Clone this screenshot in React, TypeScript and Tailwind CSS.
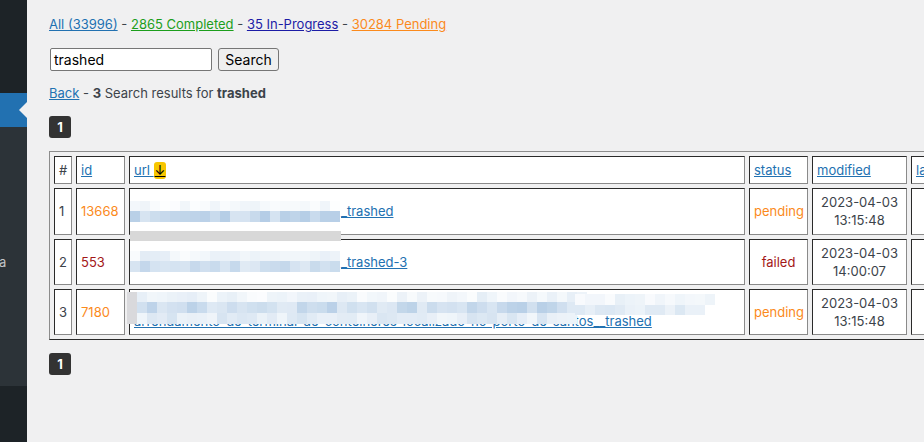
import { JSX } from "react";

type Band = { x: number; y: number; h: number; n: number; lo: number; hi: number; w?: number };

// pixelated redaction blocks, like the ones pasted over the urls in the screenshot
const Pixels = ({
  width,
  height,
  bands,
  seed,
  opaque,
}: {
  width: number;
  height: number;
  bands: Band[];
  seed: number;
  opaque?: boolean;
}): JSX.Element => {
  let s = seed;
  const rnd = () => {
    s = (s * 9301 + 49297) % 233280;
    return s / 233280;
  };
  return (
    <svg width={width} height={height} className="block">
      {bands.map((b, bi) => (
        <g key={bi}>
          {opaque && (
            <rect x={b.x} y={b.y} width={b.n * (b.w ?? 10)} height={b.h} fill="#ffffff" />
          )}
          {Array.from({ length: b.n }).map((_, i) => (
            <rect
              key={i}
              x={b.x + i * (b.w ?? 10)}
              y={b.y}
              width={b.w ?? 10}
              height={b.h}
              fill="#7fa9d3"
              fillOpacity={b.lo + rnd() * (b.hi - b.lo)}
            />
          ))}
        </g>
      ))}
    </svg>
  );
};

const cell =
  "border border-t-[#2a2a2a] border-l-[#2a2a2a] border-b-[#8a8a8a] border-r-[#8a8a8a] bg-white px-[4px] py-[4px]";
const link = "text-[#2271b1] underline";

const rows = [
  { n: "1", id: "13668", idColor: "text-[#fb8a1c]", status: "pending", sColor: "text-[#fb8a1c]", date: "2023-04-03", time: "13:15:48" },
  { n: "2", id: "553", idColor: "text-[#a31818]", status: "failed", sColor: "text-[#a31818]", date: "2023-04-03", time: "14:00:07" },
  { n: "3", id: "7180", idColor: "text-[#fb8a1c]", status: "pending", sColor: "text-[#fb8a1c]", date: "2023-04-03", time: "13:15:48" },
];

const Pager = (): JSX.Element => (
  <div className="w-[22px] h-[22px] rounded-[3px] bg-[#333333] text-white font-bold text-[13px] flex items-center justify-center">
    1
  </div>
);

const UrlCell = ({ index }: { index: number }): JSX.Element => {
  if (index === 0) {
    return (
      <div className="relative flex items-center -ml-[4px]">
        <Pixels
          width={211}
          height={21}
          seed={11}
          bands={[
            { x: 0, y: 0, h: 10, n: 21, lo: 0, hi: 0.14 },
            { x: 0, y: 10, h: 11, n: 21, lo: 0.3, hi: 0.62 },
          ]}
        />
        <a className={link}>_trashed</a>
        <div className="absolute left-0 top-[30px] w-[211px] h-[10px] bg-[#d8d8d8] z-10" />
      </div>
    );
  }
  if (index === 1) {
    return (
      <div className="flex items-center -ml-[4px]">
        <Pixels
          width={211}
          height={21}
          seed={47}
          bands={[
            { x: 0, y: 0, h: 10, n: 21, lo: 0.03, hi: 0.22 },
            { x: 0, y: 10, h: 11, n: 21, lo: 0.22, hi: 0.48 },
          ]}
        />
        <a className={link}>_trashed-3</a>
      </div>
    );
  }
  return (
    <div className="relative">
      <div className="h-[18.2px]" />
      <a className={link}>arrendamento-de-terminal-de-conteineres-localizado-no-porto-de-santos__trashed</a>
      <div className="absolute -left-[7px] -top-[2px] z-10">
        <svg width={590} height={33} className="block">
          <rect x={0} y={0} width={10} height={32} fill="#d9d9dc" />
        </svg>
        <div className="absolute left-0 top-0">
          <Pixels
            width={590}
            height={33}
            seed={93}
            opaque
            bands={[
              { x: 10, y: 0, h: 10, n: 45, lo: 0.03, hi: 0.2 },
              { x: 10, y: 10, h: 11, n: 45, lo: 0.22, hi: 0.55 },
              { x: 10, y: 21, h: 11, n: 44, lo: 0.08, hi: 0.32 },
              { x: 448, y: 2, h: 11, n: 14, lo: 0.04, hi: 0.2 },
              { x: 448, y: 13, h: 10, n: 13, lo: 0.14, hi: 0.34 },
            ]}
          />
        </div>
      </div>
    </div>
  );
};

export default function App(): JSX.Element {
  return (
    <div className="w-[924px] h-[442px] flex overflow-hidden bg-[#f0f0f1] font-[Inter,sans-serif] text-[13px] leading-[18.2px] text-[#3c434a]">
      <div className="w-[27px] shrink-0 flex flex-col overflow-hidden">
        <div className="h-[93px] bg-[#1d2327]" />
        <div className="h-[34px] bg-[#2271b1] relative">
          <div className="absolute right-0 top-[9px] w-0 h-0 border-y-[8px] border-y-transparent border-r-[8px] border-r-[#f0f0f1]" />
        </div>
        <div className="h-[259px] bg-[#2c3338] pt-[126px] text-[#c3c4c7] -indent-[1px] whitespace-nowrap">
          a
        </div>
        <div className="flex-1 bg-[#1d2327]" />
      </div>

      <div className="flex-1 min-w-0 flex flex-col pl-[22px] pt-[15px] overflow-hidden">
        <div className="h-[18px] leading-[18px] whitespace-nowrap">
          <a className={link}>All (33996)</a> -{" "}
          <a className="text-[#1c9e1c] underline">2865 Completed</a> -{" "}
          <a className="text-[#1c1ca6] underline">35 In-Progress</a> -{" "}
          <a className="text-[#fb8a1c] underline">30284 Pending</a>
        </div>

        <div className="mt-[15px] flex items-center gap-[6px] ml-[1px]">
          <div className="w-[162px] h-[23px] border border-[#767676] rounded-[2px] bg-white px-[3px] text-[14px] leading-[21px] text-black">
            trashed
          </div>
          <div className="w-[61px] h-[23px] border border-[#767676] rounded-[3px] bg-[#efefef] text-[14px] leading-[21px] text-black text-center">
            Search
          </div>
        </div>

        <div className="mt-[13px] h-[18px] leading-[18px] whitespace-nowrap">
          <a className={link}>Back</a> - <b>3</b> Search results for <b>trashed</b>
        </div>

        <div className="mt-[14px]">
          <Pager />
        </div>

        <div className="mt-[13px]">
          <table className="w-[987px] table-fixed border-separate border-spacing-[4px] border border-t-[#8c8c8c] border-l-[#8c8c8c] border-b-[#2a2a2a] border-r-[#2a2a2a]">
            <thead>
              <tr>
                <th className={`${cell} w-[18px] text-left font-normal`}>#</th>
                <th className={`${cell} w-[49px] text-left font-normal`}>
                  <a className={link}>id</a>
                </th>
                <th className={`${cell} w-[616px] text-left font-normal`}>
                  <a className={link}>
                    url{" "}
                    <span className="inline-block bg-[#f7c600] rounded-[3px] px-[1px] leading-[17px] text-black underline">
                      ↓
                    </span>
                  </a>
                </th>
                <th className={`${cell} w-[59px] text-left font-normal`}>
                  <a className={link}>status</a>
                </th>
                <th className={`${cell} w-[95px] text-left font-normal`}>
                  <a className={link}>modified</a>
                </th>
                <th className={`${cell} w-[120px] text-left font-normal whitespace-nowrap overflow-hidden`}>
                  <a className={link}>last_checked</a>
                </th>
              </tr>
            </thead>
            <tbody>
              {rows.map((r, i) => (
                <tr key={r.n}>
                  <td className={cell}>{r.n}</td>
                  <td className={`${cell} ${r.idColor}`}>{r.id}</td>
                  <td className={`${cell} relative whitespace-nowrap`}>
                    <UrlCell index={i} />
                  </td>
                  <td className={`${cell} text-center ${r.sColor}`}>{r.status}</td>
                  <td className={`${cell} text-center`}>
                    {r.date} {r.time}
                  </td>
                  <td className={cell}></td>
                </tr>
              ))}
            </tbody>
          </table>
        </div>

        <div className="mt-[13px]">
          <Pager />
        </div>
      </div>
    </div>
  );
}
